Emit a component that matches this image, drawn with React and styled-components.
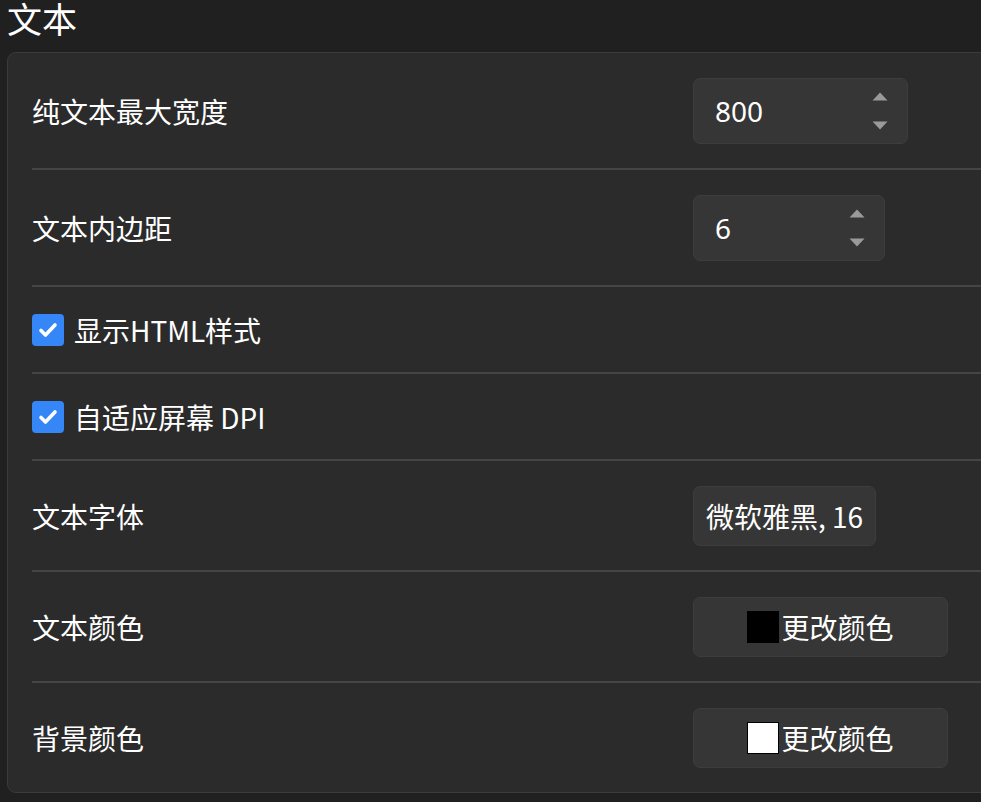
import React from "react";
import styled, { createGlobalStyle } from "styled-components";

const GlobalStyle = createGlobalStyle`
  html, body {
    margin: 0;
    padding: 0;
    background: #202020;
    overflow: hidden;
  }
  body {
    font-family: "Noto Sans", "Noto Sans CJK SC", sans-serif;
    color: #ffffff;
  }
`;

const Page = styled.div`
  width: 100%;
  height: 802px;
  overflow: hidden;
`;

const Title = styled.h1`
  margin: 0 0 17px 7px;
  font-size: 35px;
  line-height: 35px;
  font-weight: 400;
  font-family: "Noto Sans CJK SC", sans-serif;
`;

const Panel = styled.div`
  margin-left: 7px;
  width: 1020px;
  background: #2b2b2b;
  border: 1px solid #3b3b3b;
  border-radius: 9px;
  padding-left: 24px;
  box-sizing: border-box;
`;

const Row = styled.div`
  display: flex;
  align-items: center;
  height: ${(p) => p.$h}px;
  border-top: ${(p) => (p.$first ? "none" : "2px solid #454545")};
  box-sizing: border-box;
`;

const Label = styled.div`
  width: 661px;
  flex: none;
  font-size: 28px;
  font-family: "Noto Sans CJK SC", sans-serif;
`;

const SpinBox = styled.div`
  width: ${(p) => p.$w}px;
  height: 66px;
  box-sizing: border-box;
  background: #363636;
  border: 1px solid #3d3d3d;
  border-radius: 7px;
  display: flex;
  align-items: center;
  padding: 0 19px 0 21px;
  font-size: 28px;
  font-family: "Noto Sans", sans-serif;
`;

const SpinValue = styled.span`
  flex: 1;
`;

const Arrows = styled.div`
  display: flex;
  flex-direction: column;
  justify-content: space-between;
  height: 38px;
`;

const CheckLine = styled.label`
  display: flex;
  align-items: center;
  gap: 10px;
  font-size: 28px;
  font-family: "Noto Sans CJK SC", sans-serif;
`;

const CheckBox = styled.span`
  width: 32px;
  height: 32px;
  border-radius: 4px;
  background: #3586f6;
  display: flex;
  align-items: center;
  justify-content: center;
`;

const FieldButton = styled.div`
  width: ${(p) => (p.$w ? `${p.$w}px` : "auto")};
  height: 60px;
  box-sizing: border-box;
  background: #363636;
  border: 1px solid #3d3d3d;
  border-radius: 7px;
  display: flex;
  align-items: center;
  justify-content: ${(p) => (p.$center ? "center" : "flex-start")};
  padding: 0 12px;
  white-space: nowrap;
  font-size: 28px;
  font-family: "Noto Sans CJK SC", sans-serif;
`;

const Swatch = styled.span`
  width: 32px;
  height: 32px;
  box-sizing: border-box;
  background: ${(p) => p.$color};
  border: 1px solid #000;
  margin-right: 2px;
`;

const Up = () => (
  <svg width="16" height="9" viewBox="0 0 16 9">
    <path d="M8 0.5 L15.5 8.5 H0.5 Z" fill="#9a9a9a" />
  </svg>
);

const Down = () => (
  <svg width="16" height="9" viewBox="0 0 16 9">
    <path d="M0.5 0.5 H15.5 L8 8.5 Z" fill="#9a9a9a" />
  </svg>
);

const Check = () => (
  <svg width="20" height="16" viewBox="0 0 20 16">
    <path d="M3 8.5 L7.5 13 L17 3" fill="none" stroke="#fff" strokeWidth="3.6" strokeLinecap="round" strokeLinejoin="round" />
  </svg>
);

function Spin({ value, width }) {
  return (
    <SpinBox $w={width}>
      <SpinValue>{value}</SpinValue>
      <Arrows>
        <Up />
        <Down />
      </Arrows>
    </SpinBox>
  );
}

export default function App() {
  return (
    <Page>
      <GlobalStyle />
      <Title>文本</Title>
      <Panel>
        <Row $first $h={115}>
          <Label>纯文本最大宽度</Label>
          <Spin value="800" width={215} />
        </Row>
        <Row $h={117}>
          <Label>文本内边距</Label>
          <Spin value="6" width={192} />
        </Row>
        <Row $h={87}>
          <CheckLine>
            <CheckBox><Check /></CheckBox>
            显示HTML样式
          </CheckLine>
        </Row>
        <Row $h={87}>
          <CheckLine>
            <CheckBox><Check /></CheckBox>
            自适应屏幕 DPI
          </CheckLine>
        </Row>
        <Row $h={111}>
          <Label>文本字体</Label>
          <FieldButton>微软雅黑, 16</FieldButton>
        </Row>
        <Row $h={111}>
          <Label>文本颜色</Label>
          <FieldButton $w={255} $center>
            <Swatch $color="#000" />更改颜色
          </FieldButton>
        </Row>
        <Row $h={111}>
          <Label>背景颜色</Label>
          <FieldButton $w={255} $center>
            <Swatch $color="#fff" />更改颜色
          </FieldButton>
        </Row>
      </Panel>
    </Page>
  );
}
